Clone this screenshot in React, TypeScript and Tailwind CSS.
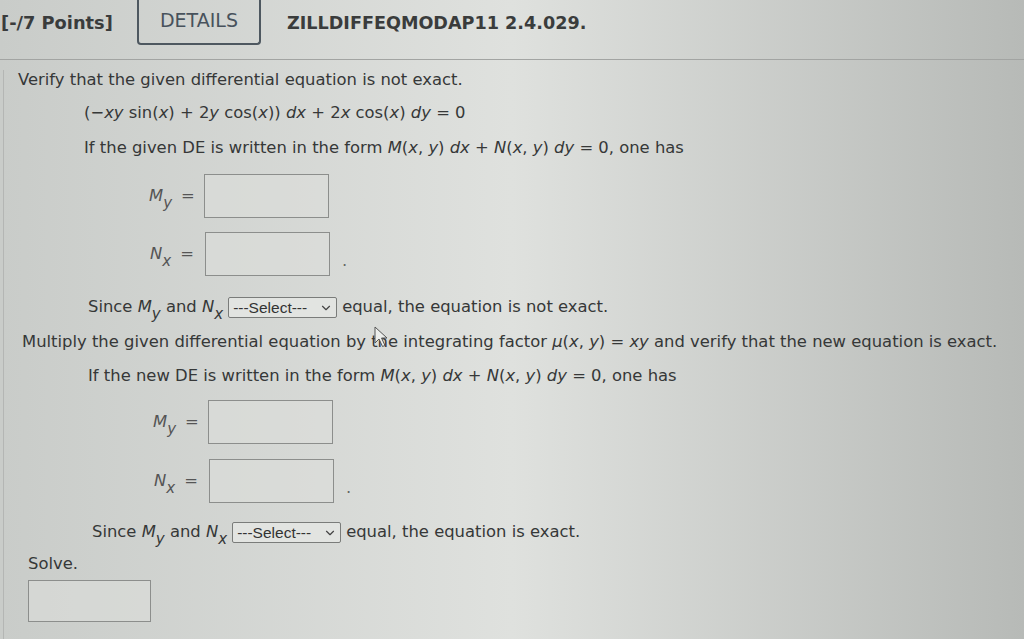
import { ChevronDown } from "lucide-react";

function Sub({ v, s }: { v: string; s: string }) {
  return (
    <span className="italic">
      {v}
      <span className="relative top-[7px] text-[15px]">{s}</span>
    </span>
  );
}

function AnswerBox({ w = "w-[125px]", h = "h-[44px]" }: { w?: string; h?: string }) {
  return <div className={`${w} ${h} border border-[#8c8e8c] bg-[#dcdedb]/60`} />;
}

function SelectBox() {
  return (
    <span className="inline-flex items-center justify-between w-[109px] h-[21px] border border-[#7a7c7a] rounded-[2px] bg-[#e2e4e1] pl-[4px] pr-[3px] font-['Liberation_Sans'] text-[15.5px] text-[#333] mx-[5px]">
      ---Select---
      <ChevronDown size={14} strokeWidth={2} className="text-[#444]" />
    </span>
  );
}

function DerivRow({ v, s, left, dot = false, mt }: { v: string; s: string; left: string; dot?: boolean; mt: string }) {
  return (
    <div className={`flex items-center ${mt} ${left}`}>
      <span className="w-[55px] text-[#555] flex items-center gap-[9px]">
        <Sub v={v} s={s} />
        <span>=</span>
      </span>
      <AnswerBox />
      {dot && <span className="ml-[12px] mt-[14px] text-[#666]">.</span>}
    </div>
  );
}

export default function App() {
  return (
    <div className="relative w-[1024px] h-[639px] overflow-hidden bg-linear-to-r from-[#c9ccc9] via-[#dfe1de] to-[#b7bab7] font-['DejaVu_Sans',sans-serif] text-[16.4px] text-[#363838]">
      <header className="flex items-stretch h-[60px] border-b border-[#a2a4a2]">
        <div className="flex items-center pl-[1px] pb-[13px] font-bold text-[17.8px] text-[#3a3c3c] w-[137px]">[-/7 Points]</div>
        <div className="mt-[-4px] h-[49px] w-[124px] border-2 border-t-0 border-[#4e5860] rounded-b-[4px] flex items-center justify-center pt-[2px] text-[19px] text-[#48525c]">
          DETAILS
        </div>
        <div className="flex items-center pl-[26px] pb-[13px] font-bold text-[17.6px] text-[#3a3c3c]">ZILLDIFFEQMODAP11 2.4.029.</div>
      </header>

      <div className="border-l border-[#b4b6b4] ml-[3px] h-full">
        <p className="mt-[10px] ml-[14px] leading-[20px]">Verify that the given differential equation is not exact.</p>
        <p className="mt-[13px] ml-[80px] leading-[20px]">
          (−<i>xy</i> sin(<i>x</i>) + 2<i>y</i> cos(<i>x</i>)) <i>dx</i> + 2<i>x</i> cos(<i>x</i>) <i>dy</i> = 0
        </p>
        <p className="mt-[15px] ml-[80px] leading-[20px]">
          If the given DE is written in the form <i>M</i>(<i>x</i>, <i>y</i>) <i>dx</i> + <i>N</i>(<i>x</i>, <i>y</i>) <i>dy</i> = 0, one has
        </p>

        <DerivRow v="M" s="y" left="ml-[145px]" mt="mt-[16px]" />
        <DerivRow v="N" s="x" left="ml-[146px]" mt="mt-[14px]" dot />

        <div className="flex items-center mt-[21px] ml-[84px] h-[21px]">
          Since&nbsp;<Sub v="M" s="y" />&nbsp;and&nbsp;<Sub v="N" s="x" />
          <SelectBox />
          equal, the equation is not exact.
        </div>

        <p className="mt-[14px] ml-[18px] leading-[20px] whitespace-nowrap">
          Multiply the given differential equation by the integrating factor <i>μ</i>(<i>x</i>, <i>y</i>) = <i>xy</i> and verify that the new equation is exact.
        </p>
        <p className="mt-[14px] ml-[84px] leading-[20px]">
          If the new DE is written in the form <i>M</i>(<i>x</i>, <i>y</i>) <i>dx</i> + <i>N</i>(<i>x</i>, <i>y</i>) <i>dy</i> = 0, one has
        </p>

        <DerivRow v="M" s="y" left="ml-[149px]" mt="mt-[14px]" />
        <DerivRow v="N" s="x" left="ml-[150px]" mt="mt-[15px]" dot />

        <div className="flex items-center mt-[19px] ml-[88px] h-[21px]">
          Since&nbsp;<Sub v="M" s="y" />&nbsp;and&nbsp;<Sub v="N" s="x" />
          <SelectBox />
          equal, the equation is exact.
        </div>

        <p className="mt-[11px] ml-[24px] leading-[20px]">Solve.</p>
        <div className="mt-[6px] ml-[24px]">
          <AnswerBox w="w-[123px]" h="h-[42px]" />
        </div>
      </div>

      <svg className="absolute left-[374px] top-[326px]" width="16" height="22" viewBox="0 0 16 22">
        <path d="M1 1 L1 17 L5 13 L8.5 20.5 L11 19.5 L7.5 12 L13 12 Z" fill="#eceeec" stroke="#555" strokeWidth="1" />
      </svg>
    </div>
  );
}
